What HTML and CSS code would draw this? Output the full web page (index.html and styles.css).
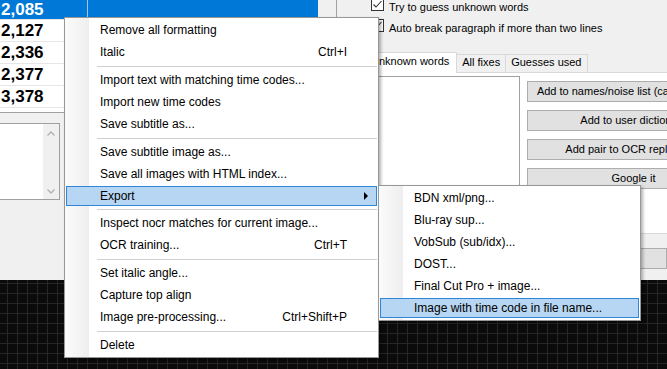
FILE: index.html
```html
<!doctype html>
<html><head>
	<title>OCR - context menu</title>
	<meta charset="utf-8">
	<link rel="stylesheet" href="styles.css">
</head><body>
<div class="app">
	<div class="top">
		<div class="left">
			<div class="list">
				<div class="rows">
					<div class="row sel"><span class="cell">2,085</span></div>
					<div class="row"><span class="cell">2,127</span></div>
					<div class="row"><span class="cell">2,336</span></div>
					<div class="row"><span class="cell">2,377</span></div>
					<div class="row"><span class="cell">3,378</span></div>
				</div>
				<div class="vscroll"></div>
			</div>
			<div class="memo">
				<div class="memo-text"></div>
				<div class="memo-scroll">
					<svg width="8" height="5" viewBox="0 0 8 5"><path d="M0.5 4.5 L4 1 L7.5 4.5" fill="none" stroke="#b0b0b0" stroke-width="1.3"/></svg>
					<svg width="8" height="5" viewBox="0 0 8 5"><path d="M0.5 0.5 L4 4 L7.5 0.5" fill="none" stroke="#b0b0b0" stroke-width="1.3"/></svg>
				</div>
			</div>
		</div>
		<div class="right">
			<div class="checks">
				<label class="check"><span class="box"><svg width="11" height="11" viewBox="0 0 11 11"><path d="M1.5 5.5 L4 8 L9.5 2" fill="none" stroke="#333" stroke-width="1.1"/></svg></span>Try to guess unknown words</label>
				<label class="check"><span class="box"><svg width="11" height="11" viewBox="0 0 11 11"><path d="M1.5 5.5 L4 8 L9.5 2" fill="none" stroke="#333" stroke-width="1.1"/></svg></span>Auto break paragraph if more than two lines</label>
			</div>
			<div class="tabs">
				<div class="tab-strip">
					<span class="tab active">Unknown words</span>
					<span class="tab">All fixes</span>
					<span class="tab">Guesses used</span>
				</div>
				<div class="tab-page">
					<div class="words"></div>
					<div class="actions">
						<button class="btn" type="button">Add to names/noise list (case sensitive)</button>
						<button class="btn" type="button">Add to user dictionary</button>
						<button class="btn" type="button">Add pair to OCR replace list</button>
						<button class="btn" type="button">Google it</button>
					</div>
				</div>
			</div>
			<div class="footer"><button class="btn small" type="button"></button></div>
		</div>
	</div>
	<div class="preview"></div>

	<div class="menu menu-main">
		<div class="item">Remove all formatting</div>
		<div class="item"><span>Italic</span><span>Ctrl+I</span></div>
		<div class="sep"></div>
		<div class="item">Import text with matching time codes...</div>
		<div class="item">Import new time codes</div>
		<div class="item">Save subtitle as...</div>
		<div class="sep"></div>
		<div class="item">Save subtitle image as...</div>
		<div class="item">Save all images with HTML index...</div>
		<div class="item hot">Export<span class="arrow"></span></div>
		<div class="sep"></div>
		<div class="item">Inspect nocr matches for current image...</div>
		<div class="item"><span>OCR training...</span><span>Ctrl+T</span></div>
		<div class="sep"></div>
		<div class="item">Set italic angle...</div>
		<div class="item">Capture top align</div>
		<div class="item"><span>Image pre-processing...</span><span>Ctrl+Shift+P</span></div>
		<div class="sep"></div>
		<div class="item">Delete</div>
	</div>

	<div class="menu menu-sub">
		<div class="item">BDN xml/png...</div>
		<div class="item">Blu-ray sup...</div>
		<div class="item">VobSub (sub/idx)...</div>
		<div class="item">DOST...</div>
		<div class="item">Final Cut Pro + image...</div>
		<div class="item hot">Image with time code in file name...</div>
	</div>
</div>
</body></html>
```

FILE: styles.css
```css
body {
	margin: 0;
	font: 12px/1.2 'Liberation Sans', Arial, sans-serif;
	color: #000;
}

.app {
	position: relative;
	width: 667px;
	height: 369px;
	overflow: hidden;
	background: #f0f0f0;
}

.top {
	display: flex;
	height: 280px;
}

.left {
	flex: none;
	width: 337px;
}

.list {
	display: flex;
	height: 113px;
	box-sizing: border-box;
	border-right: 1px solid #a0a0a0;
	border-bottom: 1px solid #a0a0a0;
}

.rows {
	flex: 1;
	background: #fff;
	overflow: hidden;
}

.row {
	display: flex;
	height: 22px;
	box-sizing: border-box;
	border-bottom: 1px solid #e6e6e6;
	font: bold 17px/21px 'Liberation Sans', Arial, sans-serif;
}

.row.sel {
	height: 20px;
	line-height: 19px;
	background: #0078d7;
	color: #fff;
}

.cell {
	width: 88px;
	box-sizing: border-box;
	padding-left: 1px;
	border-right: 1px solid #ededed;
}

.row.sel .cell {
	border-right-color: #9cc8ee;
}

.vscroll {
	width: 18px;
	background: #f0f0f0;
}

.memo {
	display: flex;
	width: 60px;
	height: 77px;
	margin-top: 10px;
	box-sizing: border-box;
	border: 1px solid #a0a0a0;
	border-left: 0;
	background: #fff;
}

.memo-text {
	flex: 1;
}

.memo-scroll {
	display: flex;
	flex-direction: column;
	justify-content: space-between;
	align-items: center;
	width: 16px;
	padding: 7px 0 5px;
	box-sizing: border-box;
	background: #f0f0f0;
}

/* form controls use the smaller dialog font */
.right {
	flex: 1;
	overflow: hidden;
	font-size: 11px;
}

.checks {
	margin: -3px 0 0 34px;
}

.check {
	display: flex;
	align-items: flex-start;
	height: 21px;
	line-height: 21px;
	white-space: nowrap;
}

.box {
	display: flex;
	align-items: center;
	justify-content: center;
	width: 13px;
	height: 13px;
	margin: 1px 5px 0 0;
	box-sizing: border-box;
	border: 1px solid #333;
	background: #fff;
}

.tabs {
	width: 420px;
	margin: 13px 0 0 28px;
}

.tab-strip {
	display: flex;
	align-items: flex-end;
	height: 20px;
	margin-left: -2px;
}

.tab {
	height: 18px;
	box-sizing: border-box;
	padding: 0 5px;
	margin-left: -1px;
	border: 1px solid #d9d9d9;
	border-bottom: 0;
	background: #f0f0f0;
	line-height: 15px;
	white-space: nowrap;
}

.tab.active {
	position: relative;
	height: 21px;
	margin: 0 0 -1px 0;
	padding: 0 7px;
	background: #fff;
	line-height: 16px;
}

.tab-page {
	display: flex;
	align-items: flex-start;
	height: 162px;
	box-sizing: border-box;
	border: 1px solid #d9d9d9;
	background: #fff;
}

.words {
	width: 152px;
	height: 153px;
	margin: 3px 0 0 2px;
	box-sizing: border-box;
	border: 1px solid #a0a0a0;
}

.actions {
	display: flex;
	flex-direction: column;
	gap: 8px;
	margin: 8px 0 0 7px;
}

.btn {
	width: 213px;
	height: 21px;
	box-sizing: border-box;
	padding: 0;
	border: 1px solid #adadad;
	background: #e1e1e1;
	color: #000;
	font: 11px/19px 'Liberation Sans', Arial, sans-serif;
	text-align: center;
	white-space: nowrap;
	overflow: hidden;
}

.footer {
	display: flex;
	padding: 14px 0 0 250px;
}

.btn.small {
	width: 110px;
}

.preview {
	height: 89px;
	background-color: #0b0b0b;
	background-image:
		linear-gradient(#262626 1px, transparent 1px),
		linear-gradient(90deg, #262626 1px, transparent 1px);
	background-size: 10px 10px;
	background-position: 7px 3px;
}

/* context menus */

.menu {
	position: absolute;
	box-sizing: border-box;
	padding: 1px;
	border: 1px solid #979797;
	background: linear-gradient(to right, #fbfbfb, #eeeeee) 0 0 / 24px 100% no-repeat, #fff;
	box-shadow: 2px 2px 3px rgba(0, 0, 0, 0.3);
}

.menu-main {
	left: 64px;
	top: 17px;
	width: 315px;
}

.menu-sub {
	left: 378px;
	top: 185px;
	width: 263px;
}

.item {
	position: relative;
	display: flex;
	justify-content: space-between;
	height: 22px;
	box-sizing: border-box;
	padding: 0 30px 0 34px;
	line-height: 22px;
	white-space: nowrap;
}

.item.hot {
	height: 20px;
	margin: 1px 0;
	padding: 0 29px 0 33px;
	border: 1px solid #2f86d8;
	background: #b7d6f3;
	line-height: 18px;
}

.sep {
	height: 1px;
	margin: 3px 0 2px 31px;
	background: #d0d0d0;
}

.arrow {
	position: absolute;
	right: 8px;
	top: 5px;
	border-left: 4px solid #000;
	border-top: 4px solid transparent;
	border-bottom: 4px solid transparent;
}
```
